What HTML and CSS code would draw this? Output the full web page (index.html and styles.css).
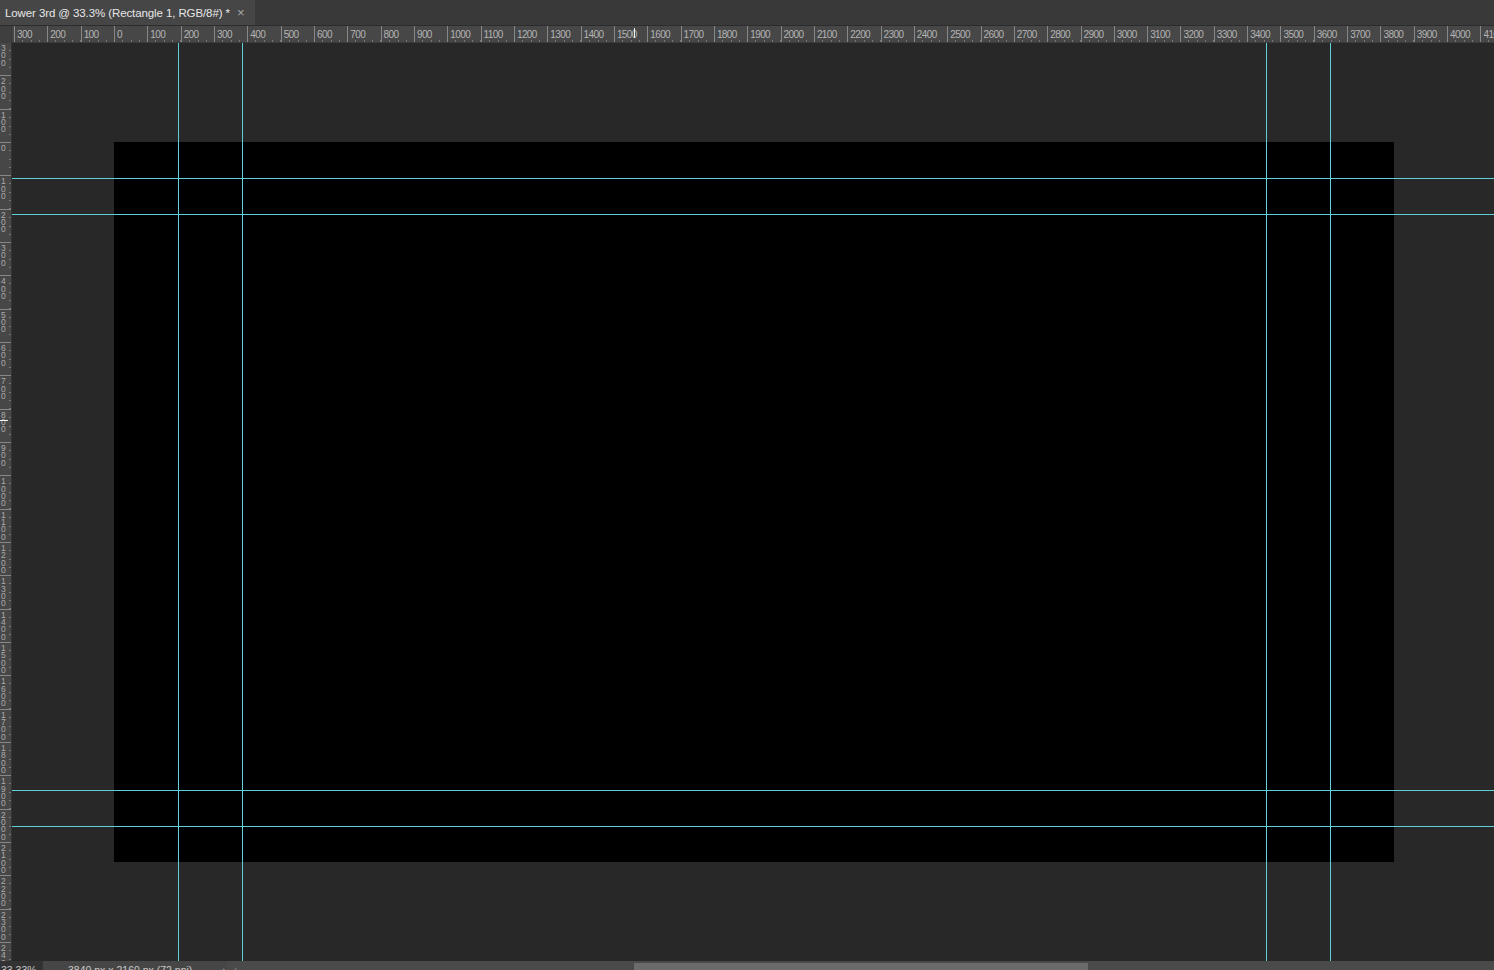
FILE: index.html
```html
<!DOCTYPE html>
<html>
<head>
<meta charset="utf-8">
<link rel="stylesheet" href="styles.css">
</head>
<body>
<div class="tabbar">
  <div class="tab"><span class="tab-title">Lower 3rd @ 33.3% (Rectangle 1, RGB/8#) *</span><span class="tab-close">×</span></div>
</div>
<div class="workspace">
  <div class="corner"></div>
  <div class="hruler">
    <span class="hcell">300</span><span class="hcell">200</span><span class="hcell">100</span><span class="hcell">0</span><span class="hcell">100</span><span class="hcell">200</span><span class="hcell">300</span><span class="hcell">400</span><span class="hcell">500</span><span class="hcell">600</span><span class="hcell">700</span><span class="hcell">800</span><span class="hcell">900</span><span class="hcell">1000</span><span class="hcell">1100</span><span class="hcell">1200</span><span class="hcell">1300</span><span class="hcell">1400</span><span class="hcell">1500</span><span class="hcell">1600</span><span class="hcell">1700</span><span class="hcell">1800</span><span class="hcell">1900</span><span class="hcell">2000</span><span class="hcell">2100</span><span class="hcell">2200</span><span class="hcell">2300</span><span class="hcell">2400</span><span class="hcell">2500</span><span class="hcell">2600</span><span class="hcell">2700</span><span class="hcell">2800</span><span class="hcell">2900</span><span class="hcell">3000</span><span class="hcell">3100</span><span class="hcell">3200</span><span class="hcell">3300</span><span class="hcell">3400</span><span class="hcell">3500</span><span class="hcell">3600</span><span class="hcell">3700</span><span class="hcell">3800</span><span class="hcell">3900</span><span class="hcell">4000</span><span class="hcell">4100</span>
    <span class="hmarker"></span>
  </div>
  <div class="vruler">
    <div class="vtrack">
      <span class="vcell"><span class="vnum">300</span></span><span class="vcell"><span class="vnum">200</span></span><span class="vcell"><span class="vnum">100</span></span><span class="vcell"><span class="vnum">0</span></span><span class="vcell"><span class="vnum">100</span></span><span class="vcell"><span class="vnum">200</span></span><span class="vcell"><span class="vnum">300</span></span><span class="vcell"><span class="vnum">400</span></span><span class="vcell"><span class="vnum">500</span></span><span class="vcell"><span class="vnum">600</span></span><span class="vcell"><span class="vnum">700</span></span><span class="vcell"><span class="vnum">800</span></span><span class="vcell"><span class="vnum">900</span></span><span class="vcell"><span class="vnum">1000</span></span><span class="vcell"><span class="vnum">1100</span></span><span class="vcell"><span class="vnum">1200</span></span><span class="vcell"><span class="vnum">1300</span></span><span class="vcell"><span class="vnum">1400</span></span><span class="vcell"><span class="vnum">1500</span></span><span class="vcell"><span class="vnum">1600</span></span><span class="vcell"><span class="vnum">1700</span></span><span class="vcell"><span class="vnum">1800</span></span><span class="vcell"><span class="vnum">1900</span></span><span class="vcell"><span class="vnum">2000</span></span><span class="vcell"><span class="vnum">2100</span></span><span class="vcell"><span class="vnum">2200</span></span><span class="vcell"><span class="vnum">2300</span></span><span class="vcell"><span class="vnum">2400</span></span>
    </div>
    <span class="vmarker"></span>
  </div>
  <div class="canvas">
    <div class="document"></div>
    <div class="guide guide-v g-x1"></div>
    <div class="guide guide-v g-x2"></div>
    <div class="guide guide-v g-x3"></div>
    <div class="guide guide-v g-x4"></div>
    <div class="guide guide-h g-y1"></div>
    <div class="guide guide-h g-y2"></div>
    <div class="guide guide-h g-y3"></div>
    <div class="guide guide-h g-y4"></div>
  </div>
</div>
<div class="status">
  <div class="zoom">33.33%</div>
  <div class="docinfo"><span>3840 px x 2160 px (72 ppi)</span><span class="arrow">›</span></div>
  <div class="hscroll"><span class="scroll-left">‹</span><div class="thumb"></div></div>
</div>
</body>
</html>
```
FILE: styles.css
```css
html, body {
  margin: 0;
  padding: 0;
}
body {
  width: 1494px;
  height: 970px;
  overflow: hidden;
  background: #282828;
  display: flex;
  flex-direction: column;
  font-family: "Liberation Sans", Arial, sans-serif;
}

/* tab bar */
.tabbar {
  flex: none;
  height: 25px;
  background: #393939;
  border-bottom: 1px solid #2c2c2c;
  display: flex;
}
.tab {
  width: 255px;
  background: #464646;
  display: flex;
  align-items: center;
  padding-left: 5px;
  box-sizing: border-box;
  color: #e6e6e6;
  font-size: 11.5px;
  white-space: nowrap;
}
.tab-title {
  letter-spacing: -0.1px;
}
.tab-close {
  margin-left: 7px;
  color: #a8a8a8;
  font-size: 13px;
}

/* workspace */
.workspace {
  flex: none;
  height: 935px;
  display: grid;
  grid-template-columns: 12px 1fr;
  grid-template-rows: 17px 1fr;
}
.corner {
  background: #3f3f3f;
  border-right: 1px solid #353535;
}
.hruler {
  position: relative;
  background: #474747;
  display: flex;
  padding-left: 2px;
  overflow: hidden;
  white-space: nowrap;
  border-bottom: 1px solid #3a3a3a;
  box-sizing: border-box;
}
.hcell {
  flex: none;
  width: 33.333px;
  box-sizing: border-box;
  border-left: 1px solid #878787;
  color: #b4b4b4;
  font-size: 10px;
  letter-spacing: -0.6px;
  padding-left: 2px;
  padding-top: 4px;
  line-height: 10px;
  background-image: repeating-linear-gradient(to right, transparent 0 7.33px, #777 7.33px 8.33px);
  background-size: 100% 2px;
  background-position: left bottom;
  background-repeat: no-repeat;
}
.hmarker {
  position: absolute;
  left: 622px;
  top: 2px;
  width: 1px;
  height: 10px;
  background: #f0f0f0;
}

.vruler {
  position: relative;
  background: #474747;
  overflow: hidden;
  border-right: 1px solid #353535;
}
.vtrack {
  display: flex;
  flex-direction: column;
  margin-top: -1px;
}
.vcell {
  flex: none;
  height: 33.333px;
  box-sizing: border-box;
  border-top: 1px solid #878787;
  display: block;
  background-image: repeating-linear-gradient(to bottom, transparent 0 7.33px, #777 7.33px 8.33px);
  background-size: 2px 100%;
  background-position: 9px top;
  background-repeat: no-repeat;
}
.vnum {
  display: block;
  width: 5px;
  word-break: break-all;
  color: #ababab;
  font-size: 8.5px;
  line-height: 7.4px;
  padding-left: 1px;
  padding-top: 2px;
}
.vmarker {
  position: absolute;
  left: 0;
  top: 377px;
  width: 8px;
  height: 1px;
  background: #f0f0f0;
}

/* canvas */
.canvas {
  position: relative;
  overflow: hidden;
  background: #282828;
}
.document {
  position: absolute;
  left: 102px;
  top: 99px;
  width: 1280px;
  height: 720px;
  background: #000;
}
.guide {
  position: absolute;
  background: #5fd0da;
}
.guide-v {
  top: 0;
  bottom: 0;
  width: 1px;
}
.guide-h {
  left: 0;
  right: 0;
  height: 1px;
}
.g-x1 { left: 166px; }
.g-x2 { left: 230px; }
.g-x3 { left: 1254px; }
.g-x4 { left: 1318px; }
.g-y1 { top: 135px; }
.g-y2 { top: 171px; }
.g-y3 { top: 747px; }
.g-y4 { top: 783px; }

/* status bar */
.status {
  flex: none;
  height: 22px;
  display: flex;
  background: #323232;
  font-size: 10.5px;
  color: #c8c8c8;
}
.zoom {
  width: 43px;
  padding-left: 1px;
  padding-top: 3px;
  box-sizing: border-box;
  white-space: nowrap;
  overflow: hidden;
}
.docinfo {
  width: 184px;
  background: #464646;
  display: flex;
  padding-left: 25px;
  padding-top: 3px;
  box-sizing: border-box;
  white-space: nowrap;
}
.arrow {
  margin-left: 30px;
  color: #bdbdbd;
}
.hscroll {
  flex: 1;
  background: #4a4a4a;
  display: flex;
  align-items: flex-start;
  padding-top: 2px;
  box-sizing: border-box;
}
.scroll-left {
  width: 20px;
  padding-left: 7px;
  box-sizing: border-box;
  color: #8a8a8a;
  font-size: 11px;
  line-height: 12px;
}
.thumb {
  margin-left: 387px;
  width: 454px;
  height: 14px;
  background: #6b6b6b;
}
```
